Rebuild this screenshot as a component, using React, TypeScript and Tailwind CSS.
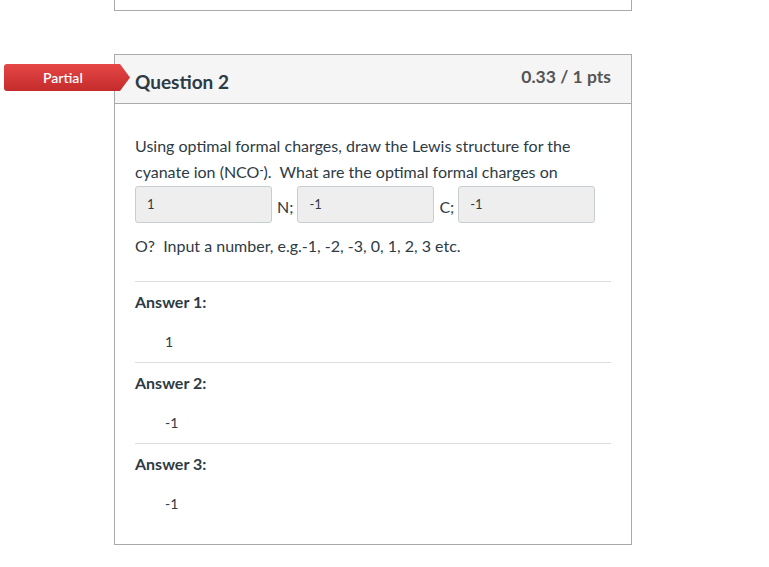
export default function App() {
  const answers = [
    { label: "Answer 1:", value: "1" },
    { label: "Answer 2:", value: "-1" },
    { label: "Answer 3:", value: "-1" },
  ]

  return (
    <div className="relative min-h-[567px] bg-white text-[#2d3b45] font-['Lato','Noto_Sans',sans-serif]">
      {/* Previous question card (tail end) */}
      <div className="ml-[114px] w-[518px] h-[11px] border-x border-b border-[#aaaaaa]" />

      {/* Status badge */}
      <div className="absolute left-[4px] top-[64px] w-[126px] h-[27px] rounded-l-[3px] bg-gradient-to-b from-[#e64646] to-[#c42b2b] [clip-path:polygon(0_0,calc(100%-10px)_0,100%_50%,calc(100%-10px)_100%,0_100%)] flex items-center pl-[39px] text-[14px] text-white font-semibold">
        Partial
      </div>

      <div className="ml-[114px] mt-[43px] w-[518px] border border-[#aaaaaa]">
        {/* Header */}
        <div className="h-[49px] bg-[#f5f5f5] border-b border-[#aaaaaa] flex justify-between px-5">
          <div className="pt-[13px] text-[19px] font-bold">Question 2</div>
          <div className="pt-[9px] text-[17.5px] font-bold text-[#555555]">0.33 / 1 pts</div>
        </div>

        {/* Body */}
        <div className="px-5 pt-[29px] pb-[27px] text-[16px] leading-[26px]">
          <p>Using optimal formal charges, draw the Lewis structure for the</p>
          <p>
            cyanate ion (NCO<sup className="text-[11px] font-bold relative -top-[4px]">-</sup>).&nbsp; What are the optimal formal charges on
          </p>
          <div className="flex items-center mt-[1px]">
            <div className="w-[137px] h-[37px] rounded-[3px] border border-[#c7cdd1] bg-[#eeeeee] px-[11px] pt-[9px] text-[13px] leading-[16px]">1</div>
            <span className="ml-[5px] mr-[4px] pt-[4px]">N;</span>
            <div className="w-[137px] h-[37px] rounded-[3px] border border-[#c7cdd1] bg-[#eeeeee] px-[11px] pt-[9px] text-[13px] leading-[16px]">-1</div>
            <span className="ml-[5px] mr-[4px] pt-[4px]">C;</span>
            <div className="w-[137px] h-[37px] rounded-[3px] border border-[#c7cdd1] bg-[#eeeeee] px-[11px] pt-[9px] text-[13px] leading-[16px]">-1</div>
          </div>
          <p className="mt-[10px]">O?&nbsp; Input a number, e.g.-1, -2, -3, 0, 1, 2, 3 etc.</p>

          <div className="mt-[22px]">
            {answers.map((a) => (
              <div key={a.label} className="border-t border-[#dddddd] pt-[7px] pb-[7px] last:pb-0">
                <div className="font-bold">{a.label}</div>
                <div className="mt-[14px] pl-[30px] text-[14px]">{a.value}</div>
              </div>
            ))}
          </div>
        </div>
      </div>
    </div>
  )
}
